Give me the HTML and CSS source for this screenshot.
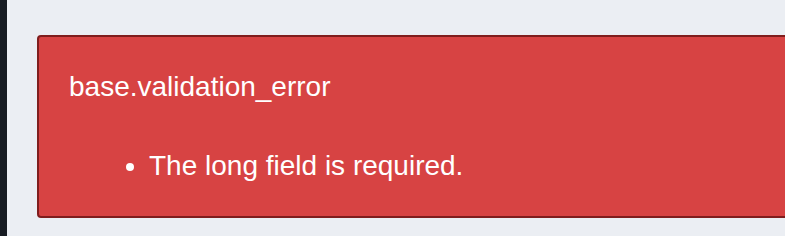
FILE: index.html
```html
<!DOCTYPE html>
<html lang="en">
<head>
    <meta charset="UTF-8">
    <meta name="viewport" content="width=device-width, initial-scale=1.0">
    <title>Validation error</title>
    <link rel="stylesheet" href="styles.css">
</head>
<body>
    <div class="layout">
        <aside class="sidebar"></aside>
        <main class="content">
            <div class="alert">
                <h2 class="alert-title">base.validation_error</h2>
                <ul class="alert-list">
                    <li>The long field is required.</li>
                </ul>
            </div>
        </main>
    </div>
</body>
</html>
```
FILE: styles.css
```css
body {
    margin: 0;
    padding: 0;
    font-family: 'Liberation Sans', Arial, sans-serif;
    background-color: #ebeef3;
    overflow: hidden;
}

.layout {
    display: flex;
    height: 236px;
}

.sidebar {
    width: 7px;
    flex-shrink: 0;
    background-color: #161b22;
}

.content {
    flex: 1;
    padding: 35px 0 0 30px;
    min-width: 0;
    overflow: hidden;
}

.alert {
    width: 820px;
    box-sizing: border-box;
    padding: 34px 28px 34px 30px;
    background-color: #d74343;
    border: 2px solid #7f1d1d;
    border-radius: 4px;
    color: #ffffff;
}

.alert-title {
    margin: 0;
    font-size: 28px;
    font-weight: normal;
}

.alert-list {
    margin: 47px 0 0 0;
    padding-left: 80px;
    font-size: 28px;
}
```
